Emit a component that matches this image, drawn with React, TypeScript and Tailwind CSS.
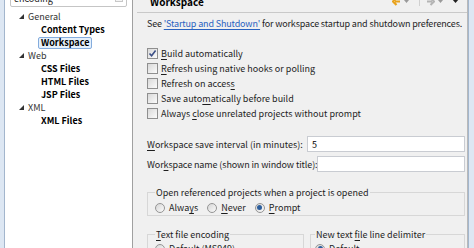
import type { ReactNode } from "react";

function U({ children }: { children: ReactNode }) {
  return <span className="underline underline-offset-[1.5px]">{children}</span>;
}

function Check({ checked = false }: { checked?: boolean }) {
  return (
    <span className="flex h-[11px] w-[11px] shrink-0 items-center justify-center border border-[#8f8f8f] bg-linear-to-br from-[#d9d9d9] to-[#fbfbfb]">
      {checked && (
        <svg width="9" height="9" viewBox="0 0 9 9">
          <path d="M1.5 4.5 L3.6 6.8 L7.6 1.6" fill="none" stroke="#3b4f86" strokeWidth="1.6" />
        </svg>
      )}
    </span>
  );
}

function Radio({ checked = false }: { checked?: boolean }) {
  return (
    <span className="flex h-[10px] w-[10px] shrink-0 items-center justify-center rounded-full border border-[#959595] bg-linear-to-br from-[#d6d6d6] to-[#fbfbfb]">
      {checked && <span className="h-[5px] w-[5px] rounded-full bg-[#2c5e9c]" />}
    </span>
  );
}

function Tri() {
  return (
    <svg width="5" height="5" viewBox="0 0 5 5" className="shrink-0">
      <polygon points="5,0 5,5 0,5" fill="#333" />
    </svg>
  );
}

function TreeParent({ label }: { label: string }) {
  return (
    <div className="flex h-[13px] items-center gap-[4px] pl-[14px] text-[#333]">
      <Tri />
      <span>{label}</span>
    </div>
  );
}

function TreeLeaf({ label, selected = false }: { label: string; selected?: boolean }) {
  return (
    <div className="flex h-[13px] items-center pl-[33px]">
      <span
        className={
          selected
            ? "rounded-[2px] border border-[#84acdd] bg-[#e5f0fb] px-[2px] leading-[10px] font-bold text-black"
            : "border border-transparent px-[2px] font-bold text-black"
        }
      >
        {label}
      </span>
    </div>
  );
}

function CheckRow({ checked, children }: { checked?: boolean; children: ReactNode }) {
  return (
    <div className="flex h-[15px] items-center gap-[3px] whitespace-nowrap">
      <Check checked={checked} />
      <span>{children}</span>
    </div>
  );
}

function Opt({ checked, children }: { checked?: boolean; children: ReactNode }) {
  return (
    <div className="flex items-center gap-[4px] whitespace-nowrap">
      <Radio checked={checked} />
      <span>{children}</span>
    </div>
  );
}

export default function App() {
  return (
    <div className="flex h-[248px] w-[474px] overflow-hidden bg-[#f0f0f0] font-['Noto_Sans_CJK_KR',sans-serif] text-[9px] leading-[13px] text-[#1e1e1e]">
      {/* window frame, left */}
      <div className="w-[5px] shrink-0 border-r border-[#a3b6cd] bg-[#dde7f3]" />

      {/* tree pane */}
      <div className="flex w-[128px] shrink-0 flex-col border-r border-[#a0a0a0] bg-white">
        <div className="mx-[5px] -mt-[10px] flex h-[17px] items-center rounded-[2px] border border-[#c5c5c5] bg-white pr-[3px] pl-[3px]">
          <span className="flex-1 text-[#222]">encoding</span>
          <span className="h-[6px] w-[8px] border border-[#c8c8c8] bg-[#f4f4f4]" />
        </div>
        <div className="mt-[3px] flex flex-col">
          <TreeParent label="General" />
          <TreeLeaf label="Content Types" />
          <TreeLeaf label="Workspace" selected />
          <TreeParent label="Web" />
          <TreeLeaf label="CSS Files" />
          <TreeLeaf label="HTML Files" />
          <TreeLeaf label="JSP Files" />
          <TreeParent label="XML" />
          <TreeLeaf label="XML Files" />
        </div>
      </div>

      <div className="w-[4px] shrink-0" />

      {/* preference page */}
      <div className="flex min-w-0 flex-1 flex-col border-r border-[#b9b9b9]">
        <div className="-mt-[10px] flex h-[23px] shrink-0 items-center border-b border-[#c9c9c9] pr-[8px] pl-[13px]">
          <span className="text-[10px] font-bold text-black">Workspace</span>
          <div className="ml-auto flex items-center">
            <svg width="9" height="9" viewBox="0 0 9 9">
              <path d="M8 4.5 H3 M4.5 1 L1 4.5 L4.5 8" fill="none" stroke="#e8a21c" strokeWidth="2.2" />
            </svg>
            <svg width="5" height="3" viewBox="0 0 5 3" className="ml-[3px]">
              <polygon points="0,0 5,0 2.5,3" fill="#9a9a9a" />
            </svg>
            <span className="ml-[10px] h-[9px] w-px bg-[#d0d0d0]" />
            <svg width="9" height="9" viewBox="0 0 9 9" className="ml-[6px]">
              <path d="M1 4.5 H6 M4.5 1 L8 4.5 L4.5 8" fill="none" stroke="#b4b4b4" strokeWidth="2" />
            </svg>
            <svg width="5" height="3" viewBox="0 0 5 3" className="ml-[3px]">
              <polygon points="0,0 5,0 2.5,3" fill="#9a9a9a" />
            </svg>
            <svg width="7" height="4" viewBox="0 0 7 4" className="ml-[9px]">
              <polygon points="0,0 7,0 3.5,4" fill="#222" />
            </svg>
          </div>
        </div>

        <div className="flex flex-col pr-[2px] pl-[10px]">
          <div className="mt-[4px] h-[14px] leading-[14px] tracking-[-0.15px] whitespace-nowrap">
            See{" "}
            <span className="text-[#2a62c0] underline underline-offset-[1.5px]">'Startup and Shutdown'</span> for
            workspace startup and shutdown preferences.
          </div>

          <div className="mt-[15px] flex flex-col">
            <CheckRow checked>
              <U>B</U>uild automatically
            </CheckRow>
            <CheckRow>
              <U>R</U>efresh using native hooks or polling
            </CheckRow>
            <CheckRow>
              Refresh on acces<U>s</U>
            </CheckRow>
            <CheckRow>
              Save auto<U>m</U>atically before build
            </CheckRow>
            <CheckRow>
              Always <U>c</U>lose unrelated projects without prompt
            </CheckRow>
          </div>

          <div className="mt-[15px] flex h-[16px] items-center">
            <span className="w-[160px] shrink-0 whitespace-nowrap">
              <U>W</U>orkspace save interval (in minutes):
            </span>
            <div className="flex h-[16px] flex-1 items-center border border-[#c9ccd2] bg-white pl-[4px] text-black">5</div>
          </div>
          <div className="mt-[4px] flex h-[16px] items-center">
            <span className="w-[170px] shrink-0 tracking-[-0.1px] whitespace-nowrap">
              Wor<U>k</U>space name (shown in window title):
            </span>
            <div className="h-[16px] flex-1 border border-[#c9ccd2] bg-white" />
          </div>

          <fieldset className="mt-[14px] h-[30px] border border-[#d7d7d7] px-[7px]">
            <legend className="px-[1px]">Open referenced projects when a project is opened</legend>
            <div className="mt-[2px] flex items-center gap-[9px]">
              <Opt>
                Alwa<U>y</U>s
              </Opt>
              <Opt>
                <U>N</U>ever
              </Opt>
              <Opt checked>
                <U>P</U>rompt
              </Opt>
            </div>
          </fieldset>

          <div className="mt-[12px] flex gap-[6px]">
            <fieldset className="h-[40px] w-[157px] shrink-0 border border-[#d7d7d7] px-[7px]">
              <legend className="px-[1px]">
                <U>T</U>ext file encoding
              </legend>
              <div className="mt-[1px]">
                <Opt>
                  <U>D</U>efault (MS949)
                </Opt>
              </div>
            </fieldset>
            <fieldset className="h-[40px] flex-1 border border-[#d7d7d7] px-[4px]">
              <legend className="px-[1px]">
                New text <U>f</U>ile line delimiter
              </legend>
              <div className="mt-[1px]">
                <Opt checked>
                  <U>D</U>efault
                </Opt>
              </div>
            </fieldset>
          </div>
        </div>
      </div>

      {/* window frame, right */}
      <div className="w-[6px] shrink-0 border-l border-[#a3b6cd] bg-[#dde7f3]" />
    </div>
  );
}
